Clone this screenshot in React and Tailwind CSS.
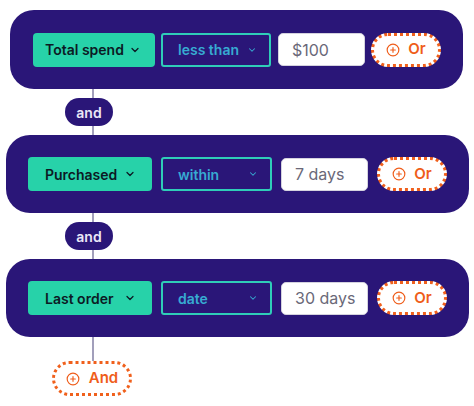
import React from 'react'
import { ChevronDown, CirclePlus } from 'lucide-react'

const rows = [
  { field: 'Total spend', op: 'less than', value: '$100' },
  { field: 'Purchased', op: 'within', value: '7 days' },
  { field: 'Last order', op: 'date', value: '30 days' }
]

function OrButton() {
  return (
    <button className="flex h-[34px] w-[70px] shrink-0 items-center justify-center gap-[8px] rounded-full border-[3px] border-dotted border-[#f0601c] bg-white text-[15px] font-semibold text-[#ef5d1a]">
      <CirclePlus size={14} strokeWidth={2} />
      <span>Or</span>
    </button>
  )
}

function RuleRow({ field, op, value, compact }) {
  return (
    <div
      className={
        compact
          ? 'ml-[10px] flex h-[79px] w-[453px] items-center gap-[6px] rounded-[24px] bg-[#2a1678] pl-[23px] pr-[22px]'
          : 'ml-[6px] flex h-[78px] w-[463px] items-center gap-[8px] rounded-[24px] bg-[#2a1678] pl-[22px] pr-[23px]'
      }
    >
      <div
        className={
          (compact ? 'w-[122px] pl-[12px] pr-[14px]' : 'w-[124px] pl-[17px] pr-[16px]') +
          ' flex h-[34px] shrink-0 items-center justify-between rounded-[4px] bg-[#27d2a9] text-[14px] font-semibold text-[#0c1a24]'
        }
      >
        <span>{field}</span>
        <ChevronDown size={12} strokeWidth={2.5} />
      </div>
      <div
        className={
          (compact ? 'w-[110px]' : 'ml-[1px] w-[111px]') +
          ' flex h-[34px] shrink-0 items-center justify-between rounded-[3px] border-2 border-[#2fcdb8] pl-[15px] pr-[12px] text-[14px] font-semibold text-[#37abd2]'
        }
      >
        <span>{op}</span>
        <ChevronDown size={10} strokeWidth={2.5} />
      </div>
      <div className="ml-[1px] flex h-[33px] w-[87px] shrink-0 items-center rounded-[5px] border border-[#d4d2de] bg-white pl-[13px] text-[16px] text-[#6a6878]">
        {value}
      </div>
      <div className={compact ? '' : 'ml-[1px]'}>
        <OrButton />
      </div>
    </div>
  )
}

function Line({ h }) {
  return <div className={'ml-[92px] w-[2px] bg-[#a29fbb] ' + h} />
}

function AndConnector() {
  return (
    <div className="flex flex-col">
      <Line h="h-[9px]" />
      <div className="ml-[65px] flex h-[28px] w-[48px] items-center justify-center rounded-full bg-[#2a1678] text-[14px] font-semibold text-[#ebe8f7]">
        and
      </div>
      <Line h="h-[9px]" />
    </div>
  )
}

export default function App() {
  return (
    <div
      className="h-[406px] w-[474px] overflow-hidden bg-white pt-[10px]"
      style={{ fontFamily: 'Inter, "Noto Sans", sans-serif' }}
    >
      <div className="flex flex-col">
        {rows.map((r, i) => (
          <React.Fragment key={r.field}>
            {i > 0 && <AndConnector />}
            <RuleRow {...r} compact={i === 0} />
          </React.Fragment>
        ))}
        <Line h="h-[24px]" />
        <button className="ml-[52px] flex h-[35px] w-[80px] items-center justify-center gap-[9px] rounded-full border-[3px] border-dotted border-[#f0601c] bg-white text-[15px] font-semibold text-[#ef5d1a]">
          <CirclePlus size={14} strokeWidth={2} />
          <span>And</span>
        </button>
      </div>
    </div>
  )
}
